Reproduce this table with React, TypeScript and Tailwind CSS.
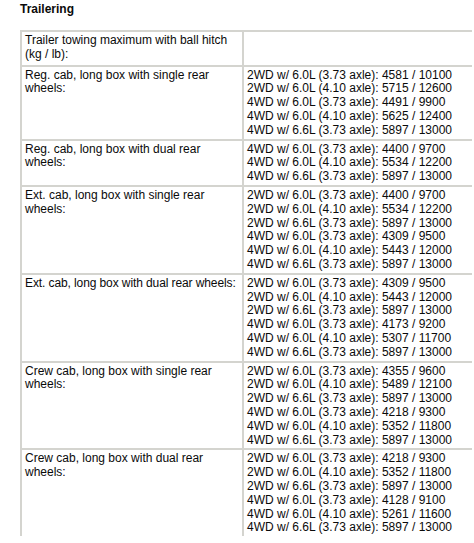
const rows: { label: string[]; tight?: boolean; values: string[] }[] = [
  {
    label: ['Reg. cab, long box with single rear', 'wheels:'],
    values: [
      '2WD w/ 6.0L (3.73 axle): 4581 / 10100',
      '2WD w/ 6.0L (4.10 axle): 5715 / 12600',
      '4WD w/ 6.0L (3.73 axle): 4491 / 9900',
      '4WD w/ 6.0L (4.10 axle): 5625 / 12400',
      '4WD w/ 6.6L (3.73 axle): 5897 / 13000',
    ],
  },
  {
    label: ['Reg. cab, long box with dual rear', 'wheels:'],
    values: [
      '4WD w/ 6.0L (3.73 axle): 4400 / 9700',
      '4WD w/ 6.0L (4.10 axle): 5534 / 12200',
      '4WD w/ 6.6L (3.73 axle): 5897 / 13000',
    ],
  },
  {
    label: ['Ext. cab, long box with single rear', 'wheels:'],
    values: [
      '2WD w/ 6.0L (3.73 axle): 4400 / 9700',
      '2WD w/ 6.0L (4.10 axle): 5534 / 12200',
      '2WD w/ 6.6L (3.73 axle): 5897 / 13000',
      '4WD w/ 6.0L (3.73 axle): 4309 / 9500',
      '4WD w/ 6.0L (4.10 axle): 5443 / 12000',
      '4WD w/ 6.6L (3.73 axle): 5897 / 13000',
    ],
  },
  {
    label: ['Ext. cab, long box with dual rear wheels:'],
    tight: true,
    values: [
      '2WD w/ 6.0L (3.73 axle): 4309 / 9500',
      '2WD w/ 6.0L (4.10 axle): 5443 / 12000',
      '2WD w/ 6.6L (3.73 axle): 5897 / 13000',
      '4WD w/ 6.0L (3.73 axle): 4173 / 9200',
      '4WD w/ 6.0L (4.10 axle): 5307 / 11700',
      '4WD w/ 6.6L (3.73 axle): 5897 / 13000',
    ],
  },
  {
    label: ['Crew cab, long box with single rear', 'wheels:'],
    values: [
      '2WD w/ 6.0L (3.73 axle): 4355 / 9600',
      '2WD w/ 6.0L (4.10 axle): 5489 / 12100',
      '2WD w/ 6.6L (3.73 axle): 5897 / 13000',
      '4WD w/ 6.0L (3.73 axle): 4218 / 9300',
      '4WD w/ 6.0L (4.10 axle): 5352 / 11800',
      '4WD w/ 6.6L (3.73 axle): 5897 / 13000',
    ],
  },
  {
    label: ['Crew cab, long box with dual rear', 'wheels:'],
    values: [
      '2WD w/ 6.0L (3.73 axle): 4218 / 9300',
      '2WD w/ 6.0L (4.10 axle): 5352 / 11800',
      '2WD w/ 6.6L (3.73 axle): 5897 / 13000',
      '4WD w/ 6.0L (3.73 axle): 4128 / 9100',
      '4WD w/ 6.0L (4.10 axle): 5261 / 11600',
      '4WD w/ 6.6L (3.73 axle): 5897 / 13000',
    ],
  },
];

export default function App() {
  return (
    <div className="min-h-screen bg-white text-[12px] leading-[13.8px] text-[#0a0a0a] font-['Liberation_Sans',Arial,sans-serif]">
      {/* Heading */}
      <div className="pl-[20px] pt-[3px] h-[30px] font-bold">Trailering</div>

      {/* Table */}
      <div className="ml-[20px] w-[452px] border-l-2 border-[#d4d4cf]">
        <div className="flex border-t-2 border-[#d4d4cf]">
          <div className="w-[222px] shrink-0 px-[3px] pt-[2px] pb-[3px] border-r-2 border-[#d4d4cf] whitespace-nowrap">
            <div>Trailer towing maximum with ball hitch</div>
            <div>(kg / lb):</div>
          </div>
          <div className="flex-1" />
        </div>

        {rows.map((row, i) => (
          <div key={i} className="flex border-t-2 border-[#d4d4cf]">
            <div
              className={
                row.tight
                  ? 'w-[222px] shrink-0 px-[3px] pt-[2px] pb-[1px] border-r-2 border-[#d4d4cf] whitespace-nowrap tracking-[-0.1px]'
                  : 'w-[222px] shrink-0 px-[3px] pt-[2px] pb-[1px] border-r-2 border-[#d4d4cf] whitespace-nowrap'
              }
            >
              {row.label.map((l, j) => (
                <div key={j}>{l}</div>
              ))}
            </div>
            <div className="flex-1 px-[3px] pt-[2px] pb-[1px] whitespace-nowrap">
              {row.values.map((v, j) => (
                <div key={j}>{v}</div>
              ))}
            </div>
          </div>
        ))}
      </div>
    </div>
  );
}
